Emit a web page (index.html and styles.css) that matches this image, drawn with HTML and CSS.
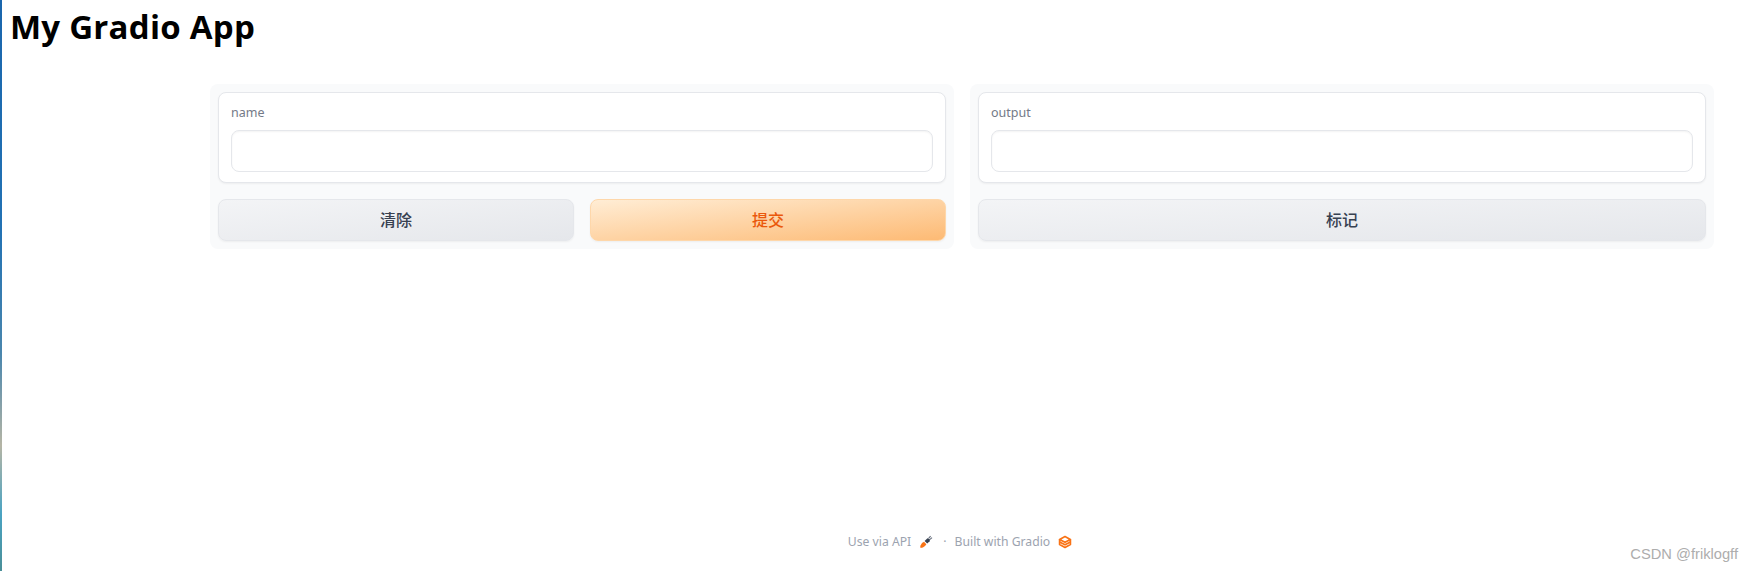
FILE: index.html
```html
<!DOCTYPE html>
<html lang="en">
<head>
  <meta charset="UTF-8">
  <title>My Gradio App</title>
  <link rel="stylesheet" href="styles.css">
</head>
<body>
  <div class="edge-strip"></div>
  <div class="page">
    <h1 class="title">My Gradio App</h1>
    <div class="app-row">
      <div class="panel">
        <div class="field">
          <label class="field-label" for="name">name</label>
          <input class="field-input" id="name" type="text">
        </div>
        <div class="btn-row">
          <button class="btn">清除</button>
          <button class="btn btn-primary">提交</button>
        </div>
      </div>
      <div class="panel">
        <div class="field">
          <label class="field-label" for="output">output</label>
          <input class="field-input" id="output" type="text">
        </div>
        <div class="btn-row">
          <button class="btn">标记</button>
        </div>
      </div>
    </div>
    <div class="footer">
      <span>Use via API</span>
      <svg class="footer-icon" viewBox="0 0 14 14" width="14" height="14">
        <path d="M1.5 13 Q0.8 10.5 3 8 L5 6.8 L7.4 9.2 L6 11 Q4 13 1.5 13 Z" fill="#f97316"/>
        <path d="M5.6 6 L8.2 3.4 Q9.4 3 10.6 4.2 Q11.2 5.4 10.6 6.2 L8.2 8.6 Z" fill="#374151"/>
        <path d="M9.8 3.2 L11.6 1.2 M11 4.4 L13 2.6" stroke="#6b7280" stroke-width="1.2"/>
      </svg>
      <span class="footer-dot">·</span>
      <span>Built with Gradio</span>
      <svg class="footer-icon" viewBox="0 0 14 14" width="14" height="14" fill="none" stroke="#f97316" stroke-width="1.7" stroke-linejoin="round">
        <path d="M7 1.6 L12.4 4.4 L7 7.2 L1.6 4.4 Z"/>
        <path d="M1.6 4.4 L1.6 9.6 L7 12.4 L12.4 9.6 L12.4 4.4"/>
        <path d="M1.6 7 L7 9.8 L12.4 7"/>
      </svg>
    </div>
    <div class="watermark">CSDN @friklogff</div>
  </div>
</body>
</html>
```

FILE: styles.css
```css
html, body {
  margin: 0;
  padding: 0;
  height: 100%;
  background: #fff;
  overflow: hidden;
}
body {
  font-family: "Noto Sans", "Noto Sans CJK SC", sans-serif;
}

.edge-strip {
  position: fixed;
  left: 0;
  top: 0;
  bottom: 0;
  width: 2px;
  background: linear-gradient(180deg, #1a66ad 0%, #2272b4 40%, #4a86ad 62%, #b5b5a5 78%, #4aa3c2 90%, #4a8f98 100%);
}

.page {
  height: 571px;
  display: flex;
  flex-direction: column;
  box-sizing: border-box;
  padding-top: 5px;
}
.title {
  margin: 0 0 0 10px;
  font-family: "Open Sans", "Noto Sans", sans-serif;
  font-size: 33px;
  font-weight: 700;
  letter-spacing: 0.25px;
  line-height: 44px;
  color: #000;
}

.app-row {
  display: flex;
  gap: 16px;
  margin: 35px 39px 0 210px;
}
.panel {
  flex: 1;
  display: flex;
  flex-direction: column;
  gap: 16px;
  padding: 8px;
  background: #f9fafb;
  border-radius: 8px;
}
.field {
  display: flex;
  flex-direction: column;
  gap: 9px;
  padding: 11px 12px 10px;
  background: #fff;
  border: 1px solid #e5e7eb;
  border-radius: 8px;
  box-shadow: 0 1px 2px rgba(0,0,0,0.05);
}
.field-label {
  font-size: 12.5px;
  line-height: 17px;
  color: #747a87;
}
.field-input {
  height: 42px;
  box-sizing: border-box;
  border: 1px solid #e5e7eb;
  border-radius: 8px;
  background: #fff;
  outline: none;
  box-shadow: inset 0 1px 2px rgba(0,0,0,0.05);
}

.btn-row {
  display: flex;
  gap: 16px;
}
.btn {
  flex: 1;
  height: 42px;
  padding: 0 0 2px;
  border: 1px solid #e5e7eb;
  border-radius: 8px;
  background: linear-gradient(to bottom right, #f3f4f6, #e5e7eb);
  box-shadow: 0 1px 2px rgba(0,0,0,0.05);
  font-family: "Noto Sans CJK SC", sans-serif;
  font-size: 16px;
  font-weight: 500;
  color: #374151;
}
.btn-primary {
  border-color: #fed7aa;
  background: linear-gradient(to bottom right, #ffedd5, #fdba74);
  color: #ea580c;
}

.footer {
  margin: auto 43px 0 210px;
  height: 38px;
  display: flex;
  align-items: flex-start;
  justify-content: center;
  gap: 8px;
  font-size: 12.2px;
  line-height: 18px;
  color: #9ca3af;
}
.footer-icon {
  margin-top: 2px;
}
.footer-dot {
  margin: 0 0 0 2px;
}

.watermark {
  position: absolute;
  right: 15px;
  bottom: 8px;
  font-family: "Liberation Sans", sans-serif;
  font-size: 14.7px;
  line-height: 18px;
  color: #adadad;
}
```
